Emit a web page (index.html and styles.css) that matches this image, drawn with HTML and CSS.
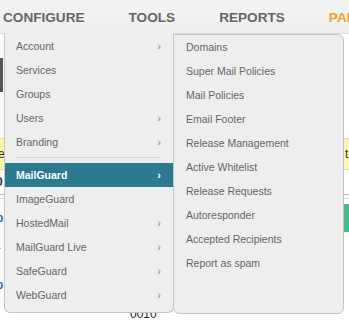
FILE: index.html
```html
<!DOCTYPE html>
<html>
<head>
<meta charset="utf-8">
<link rel="stylesheet" href="styles.css">
</head>
<body>
<div class="nav">
  <span class="nav-item">CONFIGURE</span>
  <span class="nav-item">TOOLS</span>
  <span class="nav-item">REPORTS</span>
  <span class="nav-item orange">PARTNER</span>
</div>
<div class="page">
  <div class="dark-block"></div>
  <div class="notice"><span class="notice-l">e</span><span class="notice-r">t</span></div>
  <div class="row-a"><span>0</span></div>
  <div class="rule"></div>
  <div class="green-row"><span class="blue">p</span><span class="green"></span></div>
  <div class="row-b"><span>r</span></div>
  <div class="row-c"><span class="blue">p</span></div>
  <div class="row-d">0010</div>
</div>

<div class="menu menu-main">
  <div class="item">Account<span class="arrow">›</span></div>
  <div class="item">Services</div>
  <div class="item">Groups</div>
  <div class="item">Users<span class="arrow">›</span></div>
  <div class="item">Branding<span class="arrow">›</span></div>
  <div class="sep"></div>
  <div class="item active">MailGuard<span class="arrow">›</span></div>
  <div class="item">ImageGuard</div>
  <div class="item">HostedMail<span class="arrow">›</span></div>
  <div class="item">MailGuard Live<span class="arrow">›</span></div>
  <div class="item">SafeGuard<span class="arrow">›</span></div>
  <div class="item">WebGuard<span class="arrow">›</span></div>
</div>

<div class="menu menu-sub">
  <div class="item">Domains</div>
  <div class="item">Super Mail Policies</div>
  <div class="item">Mail Policies</div>
  <div class="item">Email Footer</div>
  <div class="item">Release Management</div>
  <div class="item">Active Whitelist</div>
  <div class="item">Release Requests</div>
  <div class="item">Autoresponder</div>
  <div class="item">Accepted Recipients</div>
  <div class="item">Report as spam</div>
</div>
</body>
</html>
```
FILE: styles.css
```css
html, body {
  margin: 0;
  padding: 0;
  background: #ffffff;
  font-family: "Liberation Sans", Arial, sans-serif;
  overflow: hidden;
}
body {
  width: 349px;
  height: 321px;
  position: relative;
}
.nav {
  height: 33px;
  background: linear-gradient(#f4f4f4, #eeeeee);
  border-bottom: 1px solid #dddddd;
  display: flex;
  align-items: center;
  gap: 44px;
  padding-left: 3px;
  white-space: nowrap;
  overflow: hidden;
  box-sizing: content-box;
}
.nav-item {
  font-size: 13.6px;
  font-weight: bold;
  color: #666666;
  padding-top: 2px;
}
.nav-item.orange {
  color: #f0a424;
}
.page {
  display: flex;
  flex-direction: column;
  font-size: 12px;
}
.dark-block {
  margin-top: 24px;
  width: 3px;
  height: 34px;
  background: #555555;
}
.notice {
  margin-top: 46px;
  height: 30px;
  background: #fdf5b0;
  border-top: 1px solid #eedd88;
  border-bottom: 1px solid #eedd88;
  display: flex;
  justify-content: space-between;
  align-items: center;
  color: #333;
  font-size: 12px;
}
.notice-l { margin-left: -2px; }
.notice-r { padding-left: 2px; width: 4px; }
.row-a {
  height: 24px;
  font-weight: bold;
  color: #333;
  margin-left: -4px;
  display: flex;
  align-items: center;
}
.rule {
  height: 3px;
  border-top: 1px solid #bbbbbb;
  border-bottom: 1px solid #dddddd;
}
.green-row {
  height: 28px;
  display: flex;
  justify-content: space-between;
  align-items: center;
  margin-top: 5px;
}
.blue {
  color: #2a6fa8;
  font-weight: bold;
  margin-left: -4px;
}
.green {
  width: 6px;
  height: 28px;
  background: #3fbf8a;
}
.row-b {
  height: 38px;
  display: flex;
  align-items: center;
  color: #c8a060;
  margin-left: -3px;
}
.row-c {
  height: 30px;
  display: flex;
  align-items: center;
}
.row-d {
  margin-left: 130px;
  margin-top: 7px;
  font-size: 12px;
  color: #222;
}
.menu {
  position: absolute;
  top: 33px;
  height: 273px;
  padding: 1px 0 5px 0;
  background: #eeeeee;
  border: 1px solid #c6c6c6;
  border-top: none;
  border-radius: 0 0 6px 6px;
  font-size: 10.5px;
  color: #666666;
}
.menu-main {
  left: 4px;
  width: 168px;
}
.menu-sub {
  left: 173px;
  width: 169px;
  top: 34px;
  height: 273px;
  padding-top: 0;
  border-top: 1px solid #c6c6c6;
  border-radius: 0 6px 6px 6px;
}
.item {
  height: 24px;
  display: flex;
  align-items: center;
  justify-content: space-between;
  padding: 0 12px 0 11px;
  white-space: nowrap;
}
.menu-sub .item {
  padding-left: 12px;
}
.arrow {
  font-size: 11px;
  color: #888888;
}
.item.active {
  background: #2b7b90;
  color: #ffffff;
  font-weight: bold;
}
.item.active .arrow {
  color: #ffffff;
}
.sep {
  margin: 3px 12px 0 11px;
  box-sizing: border-box;
  border-top: 1px solid #d4d4d4;
  height: 6px;
}
```
